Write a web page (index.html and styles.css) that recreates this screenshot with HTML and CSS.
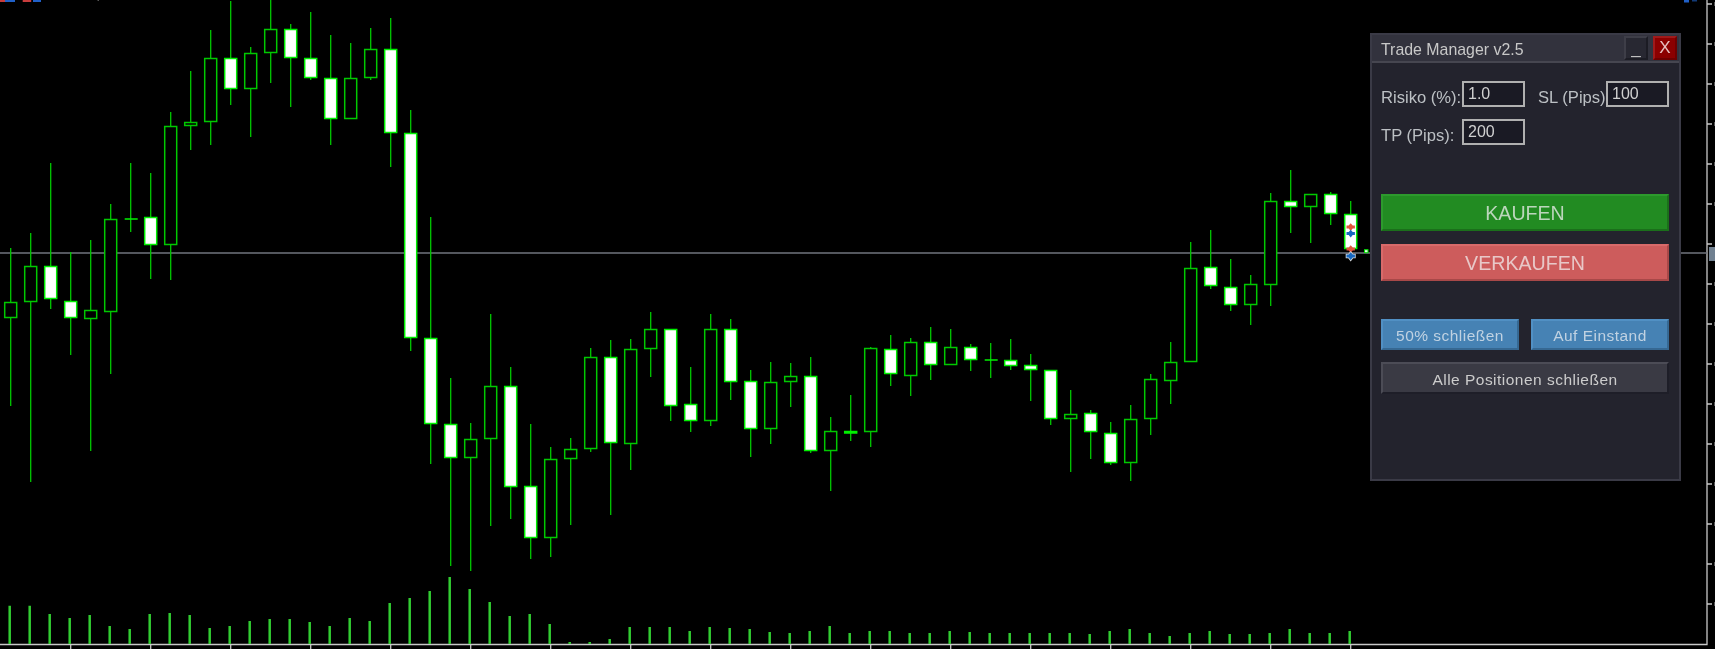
FILE: index.html
```html
<!DOCTYPE html>
<html lang="de">
<head>
<meta charset="utf-8">
<title>Trade Manager</title>
<link rel="stylesheet" href="styles.css">
</head>
<body>
<main class="terminal">
  <svg class="chart" viewBox="0 0 1715 649" width="1715" height="649" aria-hidden="true">
    <defs>
      <path id="mark" d="M0-4.2 2-2H4.2V1H2L0 3.6-2 1H-4.2V-2H-2Z"/>
    </defs>
    <path class="axis" d="M0 644.5H1707V0"/>
    <path class="axis" d="M70.7 645v4M150.7 645v4M230.7 645v4M310.7 645v4M390.7 645v4M470.7 645v4M550.7 645v4M630.7 645v4M710.7 645v4M790.7 645v4M870.7 645v4M950.7 645v4M1030.7 645v4M1110.7 645v4M1190.7 645v4M1270.7 645v4M1350.7 645v4"/>
    <path class="axis" d="M1707 4h5M1707 44h5M1707 84h5M1707 124h5M1707 164h5M1707 204h5M1707 244h5M1707 284h5M1707 324h5M1707 364h5M1707 404h5M1707 444h5M1707 484h5M1707 524h5M1707 564h5M1707 604h5"/>
    <path class="clipped" d="M1714.5 2v4M1714.5 42v4M1714.5 82v4M1714.5 122v4M1714.5 162v4M1714.5 202v4M1714.5 282v4M1714.5 322v4M1714.5 362v4M1714.5 402v4M1714.5 442v4M1714.5 482v4M1714.5 522v4M1714.5 562v4M1714.5 602v4"/>
    <rect class="price-tag" x="1709" y="247" width="6" height="14"/>
    <path class="price-line" d="M0 253H1707"/>
    <rect class="edge-red" x="0" y="0" width="5" height="2"/>
    <rect class="edge-blue" x="5" y="0" width="10" height="2"/>
    <rect class="edge-red" x="22.7" y="0" width="8.5" height="2"/>
    <rect class="edge-blue" x="33" y="0" width="8" height="2"/>
    <rect class="edge-grey" x="97.5" y="0" width="1.5" height="1"/>
    <rect class="edge-blue" x="1684" y="0" width="5" height="2.5"/>
    <rect class="edge-dim" x="1692" y="0" width="5" height="1.5"/>
    <path class="volume" d="M9.7 605.7V644M29.7 605.7V644M49.7 614V644M69.7 618V644M89.7 615V644M109.7 626V644M129.7 629V644M149.7 614V644M169.7 613V644M189.7 615V644M209.7 628V644M229.7 626V644M249.7 621V644M269.7 619V644M289.7 619V644M309.7 622V644M329.7 626V644M349.7 618V644M369.7 621V644M389.7 603V644M409.7 598V644M429.7 591V644M449.7 577V644M469.7 589V644M489.7 602V644M509.7 616V644M529.7 614V644M549.7 624V644M569.7 642V644M589.7 642V644M609.7 639V644M629.7 627V644M649.7 627V644M669.7 627V644M689.7 631V644M709.7 627V644M729.7 628V644M749.7 629V644M769.7 632V644M789.7 633V644M809.7 631V644M829.7 626V644M849.7 633V644M869.7 631V644M889.7 631V644M909.7 633V644M929.7 633V644M949.7 631V644M969.7 632V644M989.7 633V644M1009.7 633V644M1029.7 633V644M1049.7 633V644M1069.7 633V644M1089.7 634V644M1109.7 631V644M1129.7 629V644M1149.7 633V644M1169.7 636V644M1189.7 633V644M1209.7 631V644M1229.7 634V644M1249.7 634V644M1269.7 633V644M1289.7 629V644M1309.7 633V644M1329.7 633V644M1349.7 631V644"/>
    <path class="wick" d="M10.7 248V406M30.7 233V482M50.7 163V309M70.7 252V355M90.7 240V451M110.7 204V374M130.7 163V232M150.7 173V279M170.7 112V280M190.7 71V150M210.7 30V145M230.7 1V105M250.7 47V137M270.7 0V83M290.7 24V107M310.7 12V80M330.7 35V145M350.7 43V119M370.7 28V80M390.7 18V167M410.7 110V351M430.7 217V464M450.7 378V566M470.7 423V571M490.7 314V526M510.7 367V519M530.7 424V559M550.7 447V557M570.7 438V525M590.7 348V452M610.7 340V515M630.7 339V470M650.7 312V377M670.7 329V421M690.7 367V432M710.7 314V426M730.7 319V400M750.7 370V457M770.7 362V444M790.7 363V407M810.7 357V453M830.7 417V491M850.7 395V441M870.7 347V447M890.7 335V386M910.7 338V396M930.7 327V380M950.7 329V365M970.7 344V371M990.7 343V378M1010.7 339V370M1030.7 354V401M1050.7 370V425M1070.7 390V472M1090.7 410V459M1110.7 422V465M1130.7 405V481M1150.7 374V435M1170.7 342V404M1190.7 242V362M1210.7 230V289M1230.7 259V311M1250.7 275V325M1270.7 193V306M1290.7 170V233M1310.7 194V243M1330.7 192V225M1350.7 201V214"/>
    <path class="doji" d="M124.7 219H137.7M984.7 360H997.7"/>
    <path class="body hollow" d="M4.7 302.5h12V317.5h-12zM24.7 266.5h12V301.5h-12zM84.7 310.5h12V318.5h-12zM104.7 219.5h12V311.5h-12zM164.7 126.5h12V244.5h-12zM184.7 122.5h12V125.5h-12zM204.7 58.5h12V121.5h-12zM244.7 53.5h12V88.5h-12zM264.7 29.5h12V52.5h-12zM344.7 78.5h12V118.5h-12zM364.7 49.5h12V77.5h-12zM464.7 439.5h12V457.5h-12zM484.7 386.5h12V438.5h-12zM544.7 459.5h12V537.5h-12zM564.7 449.5h12V458.5h-12zM584.7 357.5h12V448.5h-12zM624.7 349.5h12V443.5h-12zM644.7 329.5h12V348.5h-12zM704.7 329.5h12V420.5h-12zM764.7 382.5h12V428.5h-12zM784.7 376.5h12V381.5h-12zM824.7 431.5h12V450.5h-12zM864.7 348.5h12V431.5h-12zM904.7 342.5h12V375.5h-12zM944.7 347.5h12V364.5h-12zM1064.7 414.5h12V418.5h-12zM1124.7 419.5h12V462.5h-12zM1144.7 379.5h12V418.5h-12zM1164.7 362.5h12V380.5h-12zM1184.7 268.5h12V361.5h-12zM1244.7 284.5h12V304.5h-12zM1264.7 201.5h12V284.5h-12zM1304.7 194.5h12V206.5h-12z"/>
    <path class="body solid" d="M44.7 266.5h12V298.5h-12zM64.7 301.5h12V317.5h-12zM144.7 217.5h12V244.5h-12zM224.7 58.5h12V88.5h-12zM284.7 29.5h12V57.5h-12zM304.7 58.5h12V77.5h-12zM324.7 78.5h12V118.5h-12zM384.7 49.5h12V132.5h-12zM404.7 133.5h12V337.5h-12zM424.7 338.5h12V423.5h-12zM444.7 424.5h12V457.5h-12zM504.7 386.5h12V486.5h-12zM524.7 486.5h12V537.5h-12zM604.7 357.5h12V442.5h-12zM664.7 329.5h12V405.5h-12zM684.7 404.5h12V420.5h-12zM724.7 329.5h12V381.5h-12zM744.7 381.5h12V428.5h-12zM804.7 376.5h12V450.5h-12zM844.7 431.5h12V433h-12zM884.7 349.5h12V373.5h-12zM924.7 342.5h12V364.5h-12zM964.7 347.5h12V359.5h-12zM1004.7 360.5h12V365.5h-12zM1024.7 365.5h12V369.5h-12zM1044.7 370.5h12V418.5h-12zM1084.7 413.5h12V431.5h-12zM1104.7 433.5h12V462.5h-12zM1204.7 267.5h12V285.5h-12zM1224.7 287.5h12V304.5h-12zM1284.7 201.5h12V206.5h-12zM1324.7 194.5h12V213.5h-12zM1344.7 214.5h12V248.5h-12z"/>
    <rect class="tick-square" x="1364.5" y="249.7" width="3.5" height="3"/>
    <use class="mark-sell" href="#mark" x="1350.7" y="227.5"/>
    <use class="mark-buy" href="#mark" x="1350.7" y="234"/>
    <use class="mark-sell" href="#mark" x="1350.7" y="249.5"/>
    <use class="mark-buy halo" href="#mark" x="1350.7" y="256.5"/>
  </svg>

  <section class="panel">
    <header class="titlebar">
      <h1 class="title">Trade Manager v2.5</h1>
      <div class="window-buttons">
        <div class="win-btn minimize">_</div>
        <div class="win-btn close">X</div>
      </div>
    </header>
    <div class="content">
      <div class="fields">
        <span class="label">Risiko (%):</span>
        <div class="input">1.0</div>
        <span class="label label-sl">SL (Pips)</span>
        <div class="input">100</div>
        <span class="label">TP (Pips):</span>
        <div class="input">200</div>
      </div>
      <div class="btn btn-large btn-buy">KAUFEN</div>
      <div class="btn btn-large btn-sell">VERKAUFEN</div>
      <div class="split">
        <div class="btn btn-small btn-blue">50% schließen</div>
        <div class="btn btn-small btn-blue">Auf Einstand</div>
      </div>
      <div class="btn btn-small btn-dark">Alle Positionen schließen</div>
    </div>
  </section>
</main>
</body>
</html>
```
FILE: styles.css
```css
* { box-sizing: border-box; }
html, body { margin: 0; padding: 0; background: #000; }
body {
  width: 1715px;
  height: 649px;
  overflow: hidden;
  font-family: "Liberation Sans", Arial, sans-serif;
}
.terminal {
  position: relative;
  width: 1715px;
  height: 649px;
  background: #000;
  filter: blur(.35px);
}
.chart { display: block; }

.axis { fill: none; stroke: #c8c8c8; stroke-width: 1.3; }
.clipped { stroke: #555; stroke-width: 1; }
.price-line { stroke: #70747e; stroke-width: 1.3; }
.price-tag { fill: #708090; }
.edge-red { fill: #c83c3c; }
.edge-blue { fill: #2060c8; }
.edge-grey { fill: #555; }
.edge-dim { fill: #123a78; }
.volume { stroke: #32cd32; stroke-width: 2.5; fill: none; }
.wick { stroke: #00c800; stroke-width: 1.3; fill: none; }
.doji { stroke: #00f000; stroke-width: 1.7; fill: none; }
.body { stroke-width: 1.5; }
.hollow { fill: #000; stroke: #00c800; }
.solid { fill: #fff; stroke: #00f000; }
.tick-square { fill: #e8ffe8; stroke: #00e000; stroke-width: 1; }
.mark-sell { fill: #e2553a; }
.mark-buy { fill: #1768c0; }
.halo { stroke: #d8dce0; stroke-width: 1.6; paint-order: stroke; }

.panel {
  position: absolute;
  left: 1370px;
  top: 33px;
  width: 311px;
  height: 448px;
  background: #23232d;
  border: 2px solid #3a3a46;
  color: #cfcfcf;
}
.titlebar {
  height: 28px;
  background: #32323d;
  border-bottom: 2px solid #464650;
  display: flex;
  justify-content: space-between;
  padding: 1px 2px 0 9px;
}
.title {
  margin: 2px 0 0;
  font-size: 15.9px;
  font-weight: 400;
  line-height: 24px;
  color: #c8c8c8;
}
.window-buttons { display: flex; gap: 5px; }
.win-btn {
  width: 24px;
  height: 24px;
  display: flex;
  justify-content: center;
  border: 2px solid;
  font-size: 17px;
  line-height: 20px;
}
.minimize {
  background: #282832;
  border-color: #3e3e48 #1c1c24 #1c1c24 #3e3e48;
  color: #c8c8c8;
  line-height: 22px;
}
.close {
  background: #8b0000;
  border-color: #a01a1a #6e0000 #6e0000 #a01a1a;
  color: #e6c0c0;
}

.content { padding: 18px 10px 0 9px; }
.fields {
  display: grid;
  grid-template-columns: 81px 63px 81px 63px;
  grid-auto-rows: 26px;
  row-gap: 12px;
  align-items: center;
  height: 63px;
}
.label {
  font-size: 16.6px;
  line-height: 26px;
  padding-top: 4px;
  margin-bottom: -4px;
  white-space: nowrap;
  color: #bcc0c4;
}
.label-sl { padding-left: 13px; }
.input {
  height: 26px;
  padding: 1px 0 0 4px;
  border: 2px solid #b0b0b0;
  background: #1a1a24;
  color: #d0d0d0;
  font-size: 16px;
  line-height: 20px;
}
.btn {
  display: flex;
  align-items: center;
  justify-content: center;
  padding-top: 2px;
  border: 2px solid;
  white-space: nowrap;
}
.btn-large { height: 37px; font-size: 19.6px; }
.btn-small { height: 31px; font-size: 15.5px; letter-spacing: .48px; }
.btn-buy {
  margin-top: 50px;
  background: #228b22;
  border-color: #2d9a2d #1b6f1b #1b6f1b #2d9a2d;
  color: #bcd6bc;
}
.btn-sell {
  margin-top: 13px;
  background: #cd5c5c;
  border-color: #d86a6a #a84848 #a84848 #d86a6a;
  color: #e8c8c8;
}
.split { display: flex; gap: 12px; margin-top: 38px; }
.split .btn { flex: 1; }
.btn-blue {
  background: #4682b4;
  border-color: #5190c4 #366892 #366892 #5190c4;
  color: #c0d2e2;
}
.btn-dark {
  margin-top: 12px;
  height: 32px;
  padding-top: 3px;
  background: #3a3a44;
  border-color: #4c4c56 #1e1e28 #1e1e28 #4c4c56;
  color: #cccccc;
}
```
